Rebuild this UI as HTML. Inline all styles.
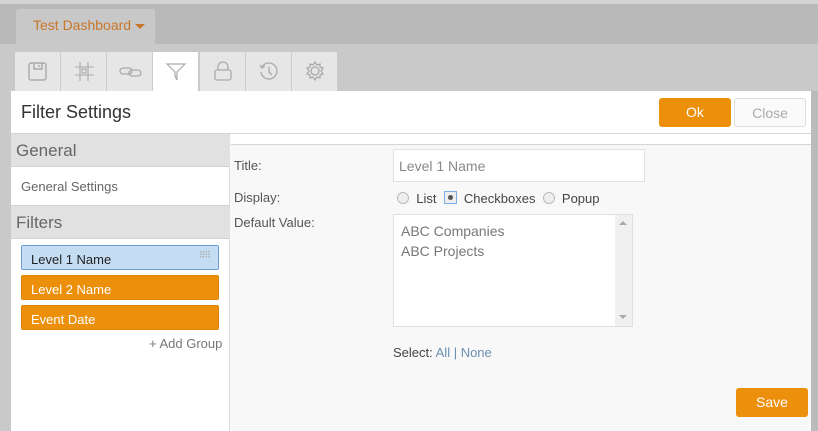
<!DOCTYPE html>
<html><head><style>
*{box-sizing:border-box;margin:0;padding:0}
body{width:818px;height:431px;overflow:hidden;background:#c9c9c9;font-family:"Liberation Sans",sans-serif;position:relative}
.abs{position:absolute}
.tab{position:absolute;top:52px;width:46px;height:39px;background:#e6e6e6;border-right:1px solid #ccc}
.tab svg{position:absolute;left:12px;top:8px}
.btn{position:absolute;border-radius:3px;font-size:14px;text-align:center}
.f{position:absolute;left:21px;width:198px;height:25px;border-radius:2px;font-size:13px;padding:6px 9px;background:#ec8f0b;color:#fff;border:1px solid #de8406}
.lbl{position:absolute;left:234px;font-size:13px;color:#555}
</style></head><body>
<div class="abs" style="left:0;top:0;width:818px;height:4px;background:#d4d4d4"></div>
<div class="abs" style="left:0;top:4px;width:818px;height:40px;background:#b9b9b9"></div>
<div class="abs" style="left:16px;top:9px;width:139px;height:35px;background:#c8c8c8;border-radius:3px 3px 0 0"></div>
<div class="abs" style="left:33px;top:17px;font-size:14px;color:#c87628">Test Dashboard <span style="display:inline-block;width:0;height:0;border-left:5px solid transparent;border-right:5px solid transparent;border-top:5px solid #c87628;vertical-align:middle"></span></div>

<div class="tab" style="left:15px"><svg width="22" height="22" fill="none" stroke="#aaa" stroke-width="1.4"><rect x="2" y="3" width="17" height="17" rx="2"/><path d="M7 3v6h8V3M12 5v2"/></svg></div>
<div class="tab" style="left:61px"><svg width="22" height="22" fill="none" stroke="#aaa" stroke-width="1.1"><path d="M7 2v19M15 2v19M2 7h19M2 15h19"/><rect x="9" y="9" width="4" height="4"/></svg></div>
<div class="tab" style="left:107px"><svg width="24" height="22" fill="none" stroke="#aaa" stroke-width="1.3"><rect x="1" y="8" width="12" height="6" rx="3"/><rect x="10" y="10" width="12" height="6" rx="3"/></svg></div>
<div class="tab" style="left:153px;background:#fff;height:40px"><svg width="22" height="22" fill="none" stroke="#aaa" stroke-width="1.2"><path d="M2 4h18l-8 8v8l-2-4v-4z"/></svg></div>
<div class="tab" style="left:200px"><svg width="22" height="22" fill="none" stroke="#aaa" stroke-width="1.3"><rect x="3" y="10" width="16" height="10" rx="2"/><path d="M6 10V7a5 5 0 0110 0v3"/></svg></div>
<div class="tab" style="left:246px"><svg width="22" height="22" fill="none" stroke="#aaa" stroke-width="1.3"><path d="M4 7a8 8 0 11-1 5M2 5l2 3 3-2M11 7v5l3 3"/></svg></div>
<div class="tab" style="left:292px"><svg width="22" height="22" fill="none" stroke="#aaa" stroke-width="1.3"><circle cx="11" cy="11" r="4"/><path d="M11 2l2 3 3-1 0 3 3 1-2 3 2 3-3 1 0 3-3-1-2 3-2-3-3 1 0-3-3-1 2-3-2-3 3-1 0-3 3 1z"/></svg></div>

<div class="abs" style="left:11px;top:91px;width:800px;height:340px;background:#f8f8f8"></div>
<div class="abs" style="left:11px;top:91px;width:800px;height:43px;background:#fff;border-bottom:1px solid #d6d6d6"></div>
<div class="abs" style="left:21px;top:102px;font-size:18px;color:#333">Filter Settings</div>
<div class="btn" style="left:659px;top:98px;width:72px;height:29px;background:#ec8f0b;color:#fff;padding-top:6px">Ok</div>
<div class="btn" style="left:734px;top:98px;width:72px;height:29px;background:#fafafa;border:1px solid #ddd;color:#aaa;padding-top:6px">Close</div>

<div class="abs" style="left:231px;top:134px;width:580px;height:11px;background:#fff;border-bottom:1px solid #d6d6d6"></div>
<div class="abs" style="left:11px;top:134px;width:219px;height:297px;background:#fff;border-right:1px solid #ddd"></div>
<div class="abs" style="left:11px;top:134px;width:219px;height:33px;background:#e1e1e1;border-bottom:1px solid #d2d2d2;font-size:17px;color:#666;padding:7px 5px">General</div>
<div class="abs" style="left:21px;top:179px;font-size:13px;color:#666">General Settings</div>
<div class="abs" style="left:11px;top:205px;width:219px;height:34px;background:#e1e1e1;border-top:1px solid #d2d2d2;border-bottom:1px solid #d2d2d2;font-size:17px;color:#666;padding:7px 5px">Filters</div>
<div class="f" style="top:245px;background:#c5ddf3;border-color:#6a9fd4;color:#222">Level 1 Name<span style="position:absolute;right:8px;top:4px;color:#aaa;font-size:9px;letter-spacing:-1px">⠿⠿</span></div>
<div class="f" style="top:275px">Level 2 Name</div>
<div class="f" style="top:305px">Event Date</div>
<div class="abs" style="left:149px;top:336px;font-size:13px;color:#777">+ Add Group</div>

<div class="lbl" style="top:158px">Title:</div>
<div class="lbl" style="top:190px">Display:</div>
<div class="lbl" style="top:215px">Default Value:</div>
<div class="abs" style="left:393px;top:149px;width:252px;height:33px;background:#fff;border:1px solid #e0e0e0;font-size:14px;color:#888;padding:8px 5px">Level 1 Name</div>
<div class="abs" style="left:397px;top:191px;font-size:13px;color:#444;white-space:nowrap">
<span style="display:inline-block;width:12px;height:12px;border-radius:50%;border:1px solid #bbb;background:#eee;vertical-align:-1px"></span> &nbsp;List &nbsp;<span style="display:inline-block;width:13px;height:13px;border:1px solid #7aaee6;background:#eee;vertical-align:-1px;position:relative"><span style="position:absolute;left:3px;top:3px;width:5px;height:5px;border-radius:50%;background:#555"></span></span> &nbsp;Checkboxes &nbsp;<span style="display:inline-block;width:12px;height:12px;border-radius:50%;border:1px solid #bbb;background:#eee;vertical-align:-1px"></span> &nbsp;Popup</div>
<div class="abs" style="left:393px;top:214px;width:240px;height:113px;background:#fff;border:1px solid #e0e0e0;font-size:14px;color:#777;padding:6px 7px;line-height:20px">ABC Companies<br>ABC Projects</div>
<div class="abs" style="left:615px;top:215px;width:17px;height:111px;background:#f0f0f0"></div>
<div class="abs" style="left:619px;top:221px;border-left:4px solid transparent;border-right:4px solid transparent;border-bottom:4px solid #aaa"></div>
<div class="abs" style="left:619px;top:315px;border-left:4px solid transparent;border-right:4px solid transparent;border-top:4px solid #aaa"></div>
<div class="abs" style="left:393px;top:345px;font-size:13px;color:#444">Select: <span style="color:#6c8fb0">All | None</span></div>
<div class="btn" style="left:736px;top:388px;width:72px;height:29px;background:#ec8f0b;color:#fff;padding-top:6px">Save</div>
<div class="abs" style="left:811px;top:91px;width:7px;height:340px;background:#bbb"></div>
</body></html>
